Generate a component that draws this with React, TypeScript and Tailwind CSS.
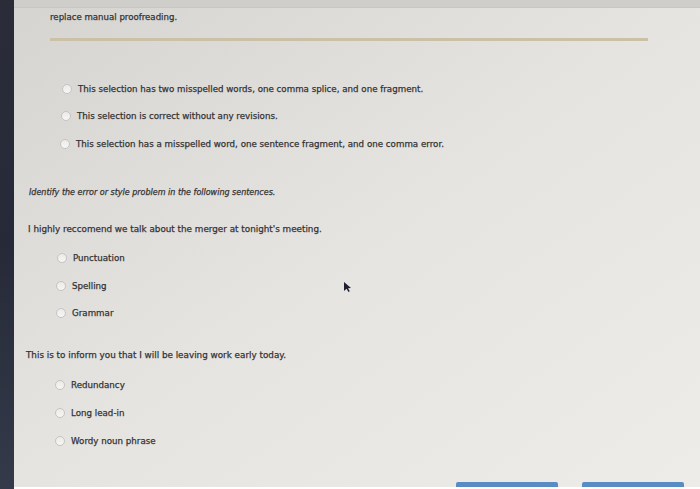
import { ReactNode } from 'react'

const font = { fontFamily: '"DejaVu Sans", Verdana, sans-serif' }

function Radio({ label, className }: { label: string; className: string }) {
  return (
    <label className={`flex items-center gap-[6px] h-[12px] text-[8.7px] leading-[12px] text-[#2e2e2e] [-webkit-text-stroke:0.25px_#3a3a3a] ${className}`}>
      <span className="w-[10px] h-[10px] rounded-full border border-[#c4c4c2] bg-gradient-to-b from-[#ecebe9] to-[#f7f6f4] shrink-0" />
      <span>{label}</span>
    </label>
  )
}

function Line({ children, className }: { children: ReactNode; className: string }) {
  return <p className={`h-[12px] leading-[12px] text-[#2e2e2e] [-webkit-text-stroke:0.25px_#3a3a3a] ${className}`}>{children}</p>
}

export default function App() {
  return (
    <div className="relative w-[700px] h-[489px] flex overflow-hidden" style={font}>
      <div className="w-[14px] h-full bg-gradient-to-b from-[#2a2c38] via-[#262a38] to-[#343a4a] shrink-0" />
      <main className="flex-1 flex flex-col bg-gradient-to-br from-[#d6d4d1] via-[#e6e4e1] to-[#eeece9]">
        <div className="h-[8px] bg-[#d0cecb] border-b border-[#c9c7c4] shrink-0" />
        <Line className="mt-[3px] ml-[36px] text-[8.6px]">replace manual proofreading.</Line>
        <div className="mt-[15px] ml-[36px] w-[598px] h-[3px] bg-[#cbc1a6]" />

        <Radio className="mt-[42px] ml-[48px]" label="This selection has two misspelled words, one comma splice, and one fragment." />
        <Radio className="mt-[15px] ml-[47px]" label="This selection is correct without any revisions." />
        <Radio className="mt-[16px] ml-[46px]" label="This selection has a misspelled word, one sentence fragment, and one comma error." />

        <Line className="mt-[37px] ml-[15px] italic text-[8px]">Identify the error or style problem in the following sentences.</Line>
        <Line className="mt-[24px] ml-[14px] text-[8.8px]">I highly reccomend we talk about the merger at tonight's meeting.</Line>

        <Radio className="mt-[17px] ml-[43px]" label="Punctuation" />
        <Radio className="mt-[16px] ml-[42px]" label="Spelling" />
        <Radio className="mt-[15px] ml-[42px]" label="Grammar" />

        <Line className="mt-[30px] ml-[12px] text-[8.8px]">This is to inform you that I will be leaving work early today.</Line>

        <Radio className="mt-[18px] ml-[41px]" label="Redundancy" />
        <Radio className="mt-[16px] ml-[41px]" label="Long lead-in" />
        <Radio className="mt-[16px] ml-[41px]" label="Wordy noun phrase" />

        <div className="mt-auto h-[5px] overflow-hidden flex justify-end gap-[24px] pr-[16px]">
          <button className="w-[102px] h-[20px] rounded-t-[2px] bg-[#5a8cc4] text-white text-[9px] leading-[14px] pt-[1px]">Grade It Now</button>
          <button className="w-[102px] h-[20px] rounded-t-[2px] bg-[#5a8cc4] text-white text-[9px] leading-[14px] pt-[1px]">Save &amp; Continue</button>
        </div>
        <div className="h-[2px] bg-white shrink-0" />
      </main>
      <svg className="absolute left-[343px] top-[281px]" width="9" height="12" viewBox="0 0 9 12">
        <path d="M1 1 L1 10 L3.5 7.8 L5.5 11 L6.8 10.3 L5 7.2 L8 7 Z" fill="#1e2030" />
      </svg>
    </div>
  )
}
